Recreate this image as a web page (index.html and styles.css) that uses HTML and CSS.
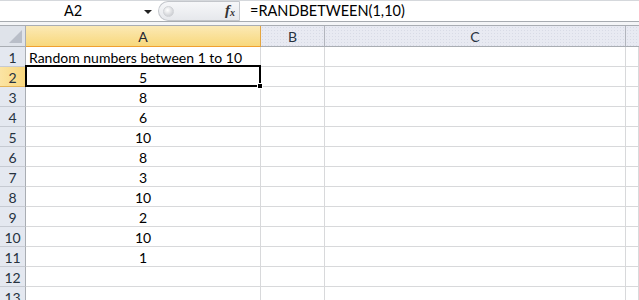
FILE: index.html
```html
<!DOCTYPE html>
<html>
<head>
<meta charset="utf-8">
<link rel="stylesheet" href="styles.css">
</head>
<body>
<div class="fbar">
  <div class="namebox"><span class="name">A2</span><span class="arrow"></span></div>
  <div class="pill"><span class="knob"></span><span class="fx">f<span class="sx">x</span></span></div>
  <div class="formula">=RANDBETWEEN(1,10)</div>
</div>
<div class="gap"></div>
<div class="sheet">
  <div class="corner"><span class="tri"></span></div>
  <div class="ch ch-active">A</div>
  <div class="ch">B</div>
  <div class="ch">C</div>
  <div class="ch ch-last"></div>

  <div class="rh">1</div><div class="c left">Random numbers between 1 to 10</div><div class="c"></div><div class="c"></div><div class="c"></div>
  <div class="rh rh-active">2</div><div class="c sel">5<span class="selbox"></span><span class="handle"></span></div><div class="c"></div><div class="c"></div><div class="c"></div>
  <div class="rh">3</div><div class="c">8</div><div class="c"></div><div class="c"></div><div class="c"></div>
  <div class="rh">4</div><div class="c">6</div><div class="c"></div><div class="c"></div><div class="c"></div>
  <div class="rh">5</div><div class="c">10</div><div class="c"></div><div class="c"></div><div class="c"></div>
  <div class="rh">6</div><div class="c">8</div><div class="c"></div><div class="c"></div><div class="c"></div>
  <div class="rh">7</div><div class="c">3</div><div class="c"></div><div class="c"></div><div class="c"></div>
  <div class="rh">8</div><div class="c">10</div><div class="c"></div><div class="c"></div><div class="c"></div>
  <div class="rh">9</div><div class="c">2</div><div class="c"></div><div class="c"></div><div class="c"></div>
  <div class="rh">10</div><div class="c">10</div><div class="c"></div><div class="c"></div><div class="c"></div>
  <div class="rh">11</div><div class="c">1</div><div class="c"></div><div class="c"></div><div class="c"></div>
  <div class="rh">12</div><div class="c"></div><div class="c"></div><div class="c"></div><div class="c"></div>
  <div class="rh">13</div><div class="c"></div><div class="c"></div><div class="c"></div><div class="c"></div>
</div>
</body>
</html>
```
FILE: styles.css
```css
html, body {
  margin: 0;
  padding: 0;
  background: #ffffff;
  overflow: hidden;
}
body {
  width: 639px;
  height: 300px;
  font-family: Lato, "Open Sans", sans-serif;
  font-size: 14px;
  color: #000;
}
.fbar {
  display: flex;
  height: 20px;
  border-top: 1px solid #d5d8dc;
  border-bottom: 1px solid #a7abb0;
  background: #fff;
}
.namebox {
  width: 158px;
  position: relative;
  display: flex;
  align-items: center;
}
.name {
  flex: 1;
  text-align: center;
  padding-left: 2px;
  line-height: 20px;
  font-size: 14.5px;
}
.arrow {
  width: 0;
  height: 0;
  border-left: 4px solid transparent;
  border-right: 4px solid transparent;
  border-top: 4px solid #222;
  margin-right: 6px;
  margin-top: 1px;
}
.pill {
  width: 82px;
  height: 20px;
  box-sizing: border-box;
  border: 1px solid #c3c6cb;
  border-right: 1px solid #c4c7cc;
  border-radius: 10px 0 0 10px;
  background: linear-gradient(#f6f7f9, #e6e8ec);
  display: flex;
  align-items: center;
  position: relative;
}
.knob {
  width: 9px;
  height: 9px;
  border-radius: 50%;
  background: radial-gradient(circle at 40% 35%, #ffffff, #d2d4d8 70%);
  border: 1px solid #d0d2d6;
  margin-left: 4px;
}
.fx {
  margin-left: auto;
  margin-right: 4px;
  font-family: "Liberation Serif", serif;
  font-style: italic;
  font-weight: bold;
  font-size: 15px;
  color: #333;
  line-height: 18px;
}
.sx {
  font-size: 10px;
  vertical-align: -1px;
}
.formula {
  flex: 1;
  padding-left: 10px;
  line-height: 20px;
  white-space: nowrap;
  font-size: 14.5px;
}
.gap {
  height: 3px;
  background: #f4f5f7;
  border-bottom: 1px solid #a9adb3;
}
.sheet {
  display: grid;
  grid-template-columns: 26px 235px 64px 301px 1fr;
  grid-auto-rows: 20px;
  grid-template-rows: 21px;
}
.corner, .ch, .rh, .c {
  box-sizing: border-box;
  border-right: 1px solid #d8d9db;
  border-bottom: 1px solid #d8d9db;
}
.corner {
  background: #dfe3ea;
  border-right: 1px solid #a9adb3;
  border-bottom: 1px solid #a9adb3;
  position: relative;
}
.tri {
  position: absolute;
  right: 3px;
  bottom: 3px;
  width: 0;
  height: 0;
  border-left: 13px solid transparent;
  border-bottom: 13px solid #b9bec8;
}
.ch {
  background-color: #e8eaf2;
  background-image: radial-gradient(#d8dbe6 0.6px, transparent 0.8px);
  background-size: 3px 3px;
  border-right: 1px solid #b2b5bd;
  border-bottom: 1px solid #a9adb3;
  text-align: center;
  line-height: 21px;
  color: #26323f;
}
.ch-active {
  background: linear-gradient(#fbe9b5, #f8d87c);
  border-right: 1px solid #e4a53f;
  border-bottom: 1px solid #f0a030;
  color: #1f2733;
}
.ch-last {
  border-right: none;
}
.rh {
  background: #e4e8f0;
  border-right: 1px solid #a9adb3;
  border-bottom: 1px solid #c6cad2;
  text-align: center;
  line-height: 21px;
  color: #26323f;
}
.rh-active {
  background: linear-gradient(90deg, #fbe4a4, #f8d77e);
  border-right: 1px solid #f0a030;
  border-bottom: 1px solid #e4b45a;
}
.c {
  text-align: center;
  line-height: 21px;
  white-space: nowrap;
  background: #fff;
}
.c.left {
  text-align: left;
  padding-left: 3px;
  overflow: visible;
}
.sel {
  position: relative;
}
.selbox {
  position: absolute;
  top: -2px;
  left: -1px;
  width: 236px;
  height: 22px;
  box-sizing: border-box;
  border: 2px solid #000;
}
.handle {
  position: absolute;
  left: 231px;
  top: 16px;
  width: 6px;
  height: 6px;
  box-sizing: border-box;
  background: #000;
  border: 1px solid #fff;
}
```
